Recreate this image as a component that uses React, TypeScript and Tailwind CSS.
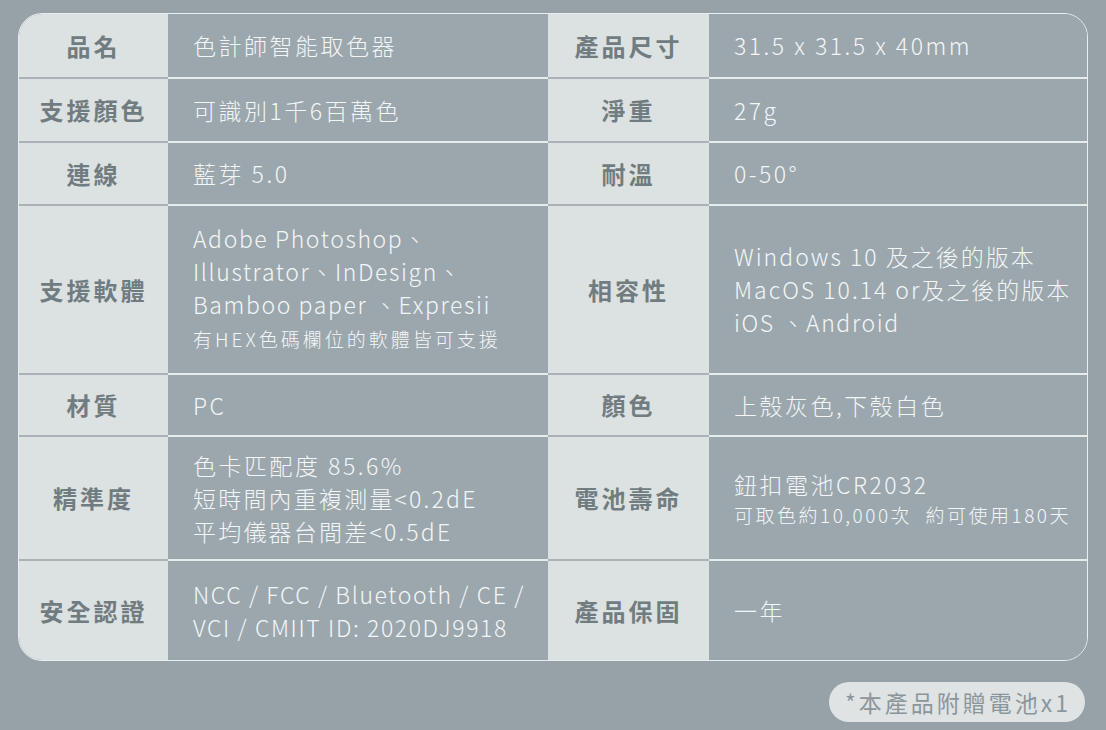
const latin = "tracking-[1.6px] whitespace-nowrap";

const rows: { a: string; av: React.ReactNode; b: string; bv: React.ReactNode }[] = [
  { a: "品名", av: "色計師智能取色器", b: "產品尺寸", bv: "31.5 x 31.5 x 40mm" },
  { a: "支援顏色", av: "可識別1千6百萬色", b: "淨重", bv: "27g" },
  { a: "連線", av: "藍芽 5.0", b: "耐溫", bv: "0-50°" },
  {
    a: "支援軟體",
    av: (
      <>
        <div className={latin}>Adobe Photoshop、</div>
        <div className={latin}>Illustrator、InDesign、</div>
        <div className={latin}>Bamboo paper 、Expresii</div>
        <div className="text-[19px] tracking-[3px] leading-[36px]">有HEX色碼欄位的軟體皆可支援</div>
      </>
    ),
    b: "相容性",
    bv: (
      <>
        <div className="tracking-[2px] whitespace-nowrap">Windows 10 及之後的版本</div>
        <div className="tracking-[2px] whitespace-nowrap">MacOS 10.14 or及之後的版本</div>
        <div className={latin}>iOS 、Android</div>
      </>
    ),
  },
  { a: "材質", av: "PC", b: "顏色", bv: "上殼灰色,下殼白色" },
  {
    a: "精準度",
    av: (
      <>
        <div>色卡匹配度 85.6%</div>
        <div className="tracking-[2.2px]">短時間內重複測量&lt;0.2dE</div>
        <div className="tracking-[2.2px]">平均儀器台間差&lt;0.5dE</div>
      </>
    ),
    b: "電池壽命",
    bv: (
      <>
        <div>鈕扣電池CR2032</div>
        <div className="text-[19px] tracking-[2.5px] leading-[28px]">可取色約10,000次&nbsp; 約可使用180天</div>
      </>
    ),
  },
  {
    a: "安全認證",
    av: (
      <>
        <div className={latin}>NCC / FCC / Bluetooth / CE /</div>
        <div className={latin}>VCI / CMIIT ID: 2020DJ9918</div>
      </>
    ),
    b: "產品保固",
    bv: "一年",
  },
];

function Label({ text, last }: { text: string; last: boolean }) {
  return (
    <div
      className={
        "flex items-center justify-center bg-[#dce1e2] text-[24px] font-bold tracking-[3px] text-[#717c81] " +
        (last ? "" : "border-b-2 border-[#a9b2b6]")
      }
    >
      {text}
    </div>
  );
}

function Value({ children, last }: { children: React.ReactNode; last: boolean }) {
  return (
    <div
      className={
        "flex flex-col justify-center bg-[#9ba7ad] pl-[25px] text-[23px] font-light leading-[33px] tracking-[2.5px] text-[#f3f6f7] " +
        (last ? "" : "border-b-2 border-[#e6ebec]")
      }
    >
      {children}
    </div>
  );
}

export default function App() {
  return (
    <div
      className="w-[1106px] h-[730px] bg-[#96a2a8] pt-[13px] px-[18px]"
      style={{ fontFamily: '"Noto Sans CJK TC", "Noto Sans", sans-serif' }}
    >
      <div className="overflow-hidden rounded-[24px] border-[1.5px] border-[#e9edee]">
        <div className="grid grid-cols-[149px_380px_161px_1fr] grid-rows-[65px_64px_63px_169px_62px_124px_99px]">
          {rows.map((r, i) => {
            const last = i === rows.length - 1;
            return (
              <div key={i} className="contents">
                <Label text={r.a} last={last} />
                <Value last={last}>
                  {typeof r.av === "string" ? <div>{r.av}</div> : r.av}
                </Value>
                <Label text={r.b} last={last} />
                <Value last={last}>
                  {typeof r.bv === "string" ? <div>{r.bv}</div> : r.bv}
                </Value>
              </div>
            );
          })}
        </div>
      </div>
      <div className="mt-[21px] flex justify-end pr-[3px]">
        <div className="flex h-[40px] items-center rounded-full bg-[#dfe3e4] pl-[16px] pr-[14px] text-[23px] tracking-[3px] text-[#8b969b]">
          *本產品附贈電池x1
        </div>
      </div>
    </div>
  );
}
